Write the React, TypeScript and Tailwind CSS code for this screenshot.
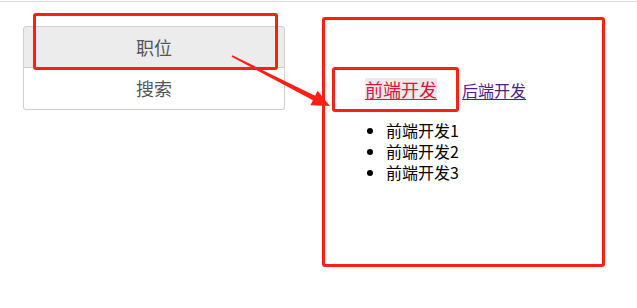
import { useState } from "react"

const font = { fontFamily: '"Microsoft YaHei", "Noto Sans CJK SC", sans-serif' }

const items = ["前端开发1", "前端开发2", "前端开发3"]

export default function App() {
  const [tab, setTab] = useState("front")

  return (
    <div className="relative w-[637px] h-[308px] bg-white overflow-hidden" style={font}>
      {/* top rule */}
      <div className="pt-px">
        <div className="h-px bg-[#dcdcdc]" />
      </div>

      <div className="flex">
        {/* left buttons */}
        <div className="ml-[23px] mt-[24px] w-[262px] flex flex-col">
          <button className="h-[42px] border border-[#cfcfcf] bg-[#ececec] rounded-t-[3px] text-[18px] text-[#555]">
            职位
          </button>
          <button className="h-[42px] border border-t-0 border-[#cfcfcf] bg-white rounded-b-[3px] text-[18px] text-[#555]">
            搜索
          </button>
        </div>

        {/* right panel */}
        <div className="ml-[37px] mt-[15px] w-[283px] h-[250px] border-[3px] border-[#fa2015] rounded-[3px]">
          <div className="pt-[58px] pl-[40px] flex items-end">
            <a
              href="#"
              onClick={(e) => {
                e.preventDefault()
                setTab("front")
              }}
              className="bg-[#ebebeb] text-[18px] leading-[22px] text-[#e8103c] underline underline-offset-2"
            >
              前端开发
            </a>
            <a
              href="#"
              onClick={(e) => {
                e.preventDefault()
                setTab("back")
              }}
              className="ml-[25px] text-[16px] leading-[20px] text-[#551a8b] underline underline-offset-2"
            >
              后端开发
            </a>
          </div>
          {tab === "front" && (
            <ul className="mt-[20px] pl-[61px] list-disc text-[16px] leading-[21px] text-black">
              {items.map((t) => (
                <li key={t}>{t}</li>
              ))}
            </ul>
          )}
        </div>
      </div>

      {/* annotations */}
      <div className="absolute left-[33px] top-[13px] w-[245px] h-[57px] border-[3px] border-[#fa2015] rounded-[3px]" />
      <div className="absolute left-[332px] top-[67px] w-[127px] h-[45px] border-[3px] border-[#fa2015] rounded-[3px]" />
      <svg className="absolute left-0 top-0" width="637" height="308">
        <polygon
          points="232.4,55.3 315.1,95.8 317.6,90.8 330,106 310.4,105.2 312.9,100.2 231.6,56.7"
          fill="#fa2015"
        />
      </svg>
    </div>
  )
}
